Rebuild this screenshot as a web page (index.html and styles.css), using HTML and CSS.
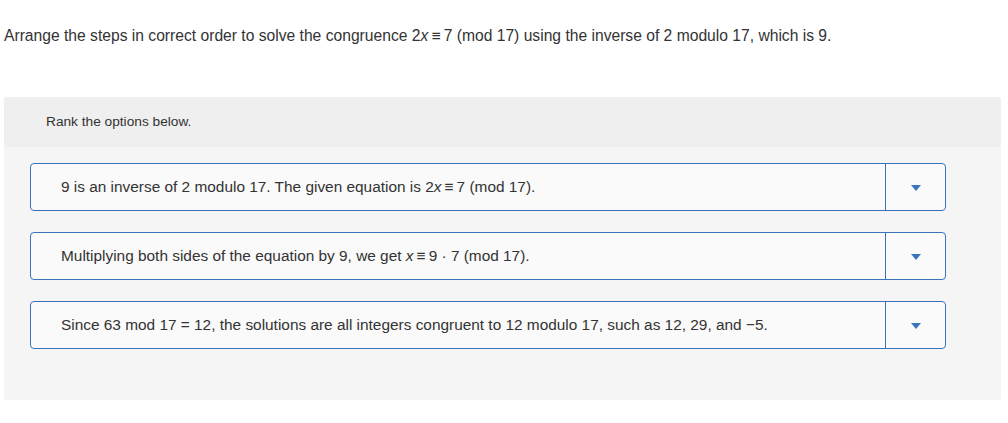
FILE: index.html
```html
<!DOCTYPE html>
<html>
<head>
<meta charset="utf-8">
<link rel="stylesheet" href="styles.css">
</head>
<body>
<p class="prompt">Arrange the steps in correct order to solve the congruence 2<i>x</i>&#8201;≡&#8201;7 (mod 17) using the inverse of 2 modulo 17, which is 9.</p>
<div class="panel">
  <div class="panel-head">Rank the options below.</div>
  <div class="panel-body">
    <div class="card">
      <div class="card-text"><span>9 is an inverse of 2 modulo 17. The given equation is 2<i>x</i>&#8201;≡&#8201;7 (mod 17).</span></div>
      <div class="card-drop"><span class="tri"></span></div>
    </div>
    <div class="card">
      <div class="card-text"><span>Multiplying both sides of the equation by 9, we get <i>x</i>&#8201;≡&#8201;9 · 7 (mod 17).</span></div>
      <div class="card-drop"><span class="tri"></span></div>
    </div>
    <div class="card">
      <div class="card-text"><span>Since 63 mod 17 = 12, the solutions are all integers congruent to 12 modulo 17, such as 12, 29, and −5.</span></div>
      <div class="card-drop"><span class="tri"></span></div>
    </div>
  </div>
</div>
</body>
</html>
```
FILE: styles.css
```css
body {
  margin: 0;
  padding: 0 7px 0 4px;
  font-family: "Liberation Sans", Arial, sans-serif;
  color: #333;
  background: #fff;
}
.prompt {
  margin: 0;
  padding-top: 27px;
  font-size: 15.65px;
  line-height: 18px;
  height: 70px;
}
.panel {
  border-radius: 3px;
  background: #f5f5f5;
  height: 303px;
}
.panel-head {
  background: #efefef;
  height: 50px;
  box-sizing: border-box;
  padding: 17px 0 0 42px;
  font-size: 13.7px;
  line-height: 16px;
  border-radius: 3px 3px 0 0;
}
.panel-body {
  padding: 16px 55px 0 26px;
  display: flex;
  flex-direction: column;
  gap: 21px;
}
.card {
  display: flex;
  height: 48px;
  box-sizing: border-box;
  border: 1px solid #3b72b8;
  border-radius: 4px;
  background: #fafafa;
}
.card-text {
  flex: 1;
  display: flex;
  align-items: center;
  padding-left: 30px;
  font-size: 15.4px;
}
.card-drop {
  width: 59px;
  border-left: 1px solid #3b72b8;
  display: flex;
  align-items: center;
  justify-content: center;
}
.tri {
  width: 0;
  height: 0;
  border-left: 5px solid transparent;
  border-right: 5px solid transparent;
  border-top: 6px solid #3a74c0;
  margin-top: 2px;
}
```
